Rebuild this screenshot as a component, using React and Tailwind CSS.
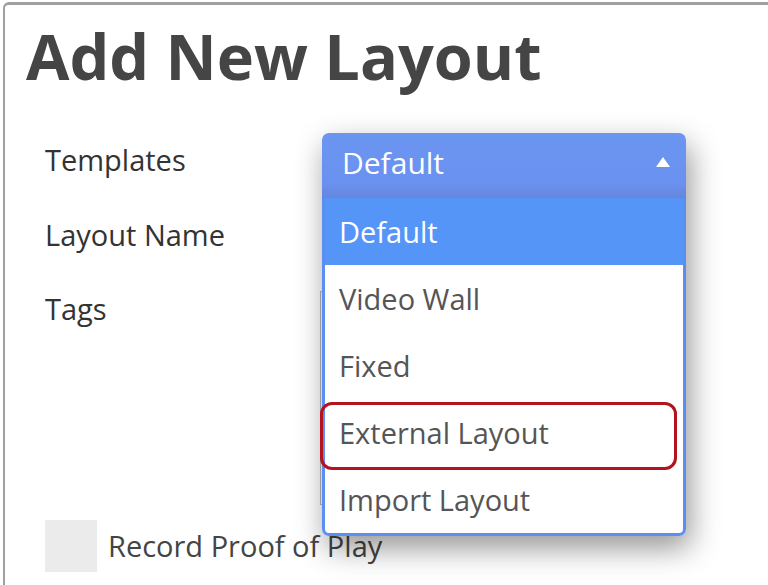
import React from 'react';

const options = ['Default', 'Video Wall', 'Fixed', 'External Layout', 'Import Layout'];

function TemplateSelect() {
    return (
        <div className="relative h-[65px] w-[364px]">
            <div className="absolute left-0 top-0 w-[364px] rounded-[7px] shadow-[4px_12px_30px_rgba(0,0,0,0.42)]">
                <div className="flex h-[65px] items-center justify-between rounded-t-[7px] bg-[linear-gradient(to_bottom,#6c95f2_0%,#6a91ef_78%,#6586dc_100%)] pb-[7px] pl-[20px] pr-[16px]">
                    <span className="text-[30px] text-white">Default</span>
                    <svg width="14" height="10" viewBox="0 0 14 10">
                        <polygon points="7,0 14,10 0,10" fill="#ffffff" />
                    </svg>
                </div>
                <ul className="rounded-b-[7px] border-x-[3px] border-b-[3px] border-[#5b8ef1] bg-white">
                    {options.map((opt, i) => (
                        <li
                            key={opt}
                            className={
                                i === 0
                                    ? 'flex h-[67px] items-center bg-[#5595f8] pl-[14px] text-[29px] text-white'
                                    : 'relative flex h-[67px] items-center pl-[14px] text-[29px] text-[#555]'
                            }
                        >
                            {opt}
                            {opt === 'External Layout' && (
                                <div className="absolute left-[-5px] top-[3px] h-[68px] w-[357px] rounded-[12px] border-[3px] border-[#b3121f]" />
                            )}
                        </li>
                    ))}
                </ul>
            </div>
        </div>
    );
}

export default function App() {
    return (
        <div className="h-[585px] w-[768px] overflow-hidden bg-white" style={{ fontFamily: '"Open Sans", "Liberation Sans", sans-serif' }}>
            <div className="ml-[3px] mt-[2px] h-[620px] rounded-tl-[6px] border-l-2 border-t-[3px] border-[#a0a0a0] pl-[40px]">
                <h1 className="ml-[-19px] mt-[19px] text-[63px] font-bold leading-none text-[#454545]">Add New Layout</h1>

                <div className="mt-[46px] flex">
                    <div className="w-[277px] pt-[10px] text-[29px] leading-[34px] text-[#333]">Templates</div>
                    <div className="relative z-10">
                        <TemplateSelect />
                    </div>
                </div>

                <div className="mt-[10px] flex h-[63px]">
                    <div className="w-[277px] pt-[10px] text-[29px] leading-[34px] text-[#333]">Layout Name</div>
                    <div className="h-[48px] w-[364px] border border-[#c4c4c4]" />
                </div>

                <div className="mt-[10px] flex">
                    <div className="w-[275px] pt-[11px] text-[29px] leading-[34px] text-[#333]">Tags</div>
                    <div className="mt-[10px] h-[214px] w-[364px] border border-[#b5b5b5]" />
                </div>

                <div className="mt-[15px] flex items-center gap-[11px]">
                    <div className="h-[52px] w-[52px] bg-[#ebebeb]" />
                    <span className="text-[29px] text-[#444]">Record Proof of Play</span>
                </div>
            </div>
        </div>
    );
}
